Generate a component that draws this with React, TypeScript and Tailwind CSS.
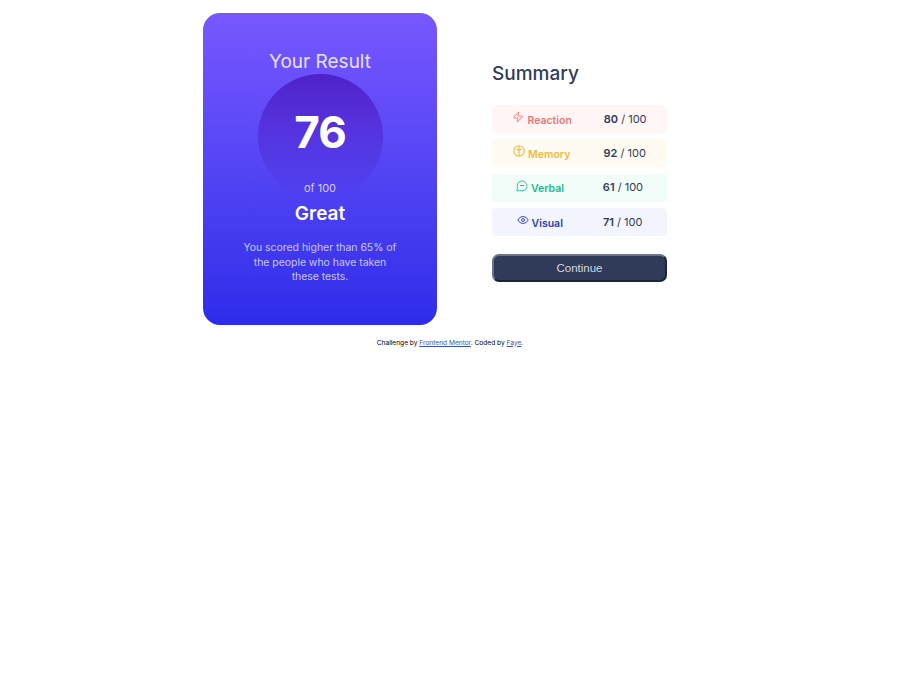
import { Eye, MessageCircle, Zap } from 'lucide-react';

function MemoryIcon() {
  return (
    <svg width="12" height="12" viewBox="0 0 12 12" fill="none" stroke="currentColor" strokeWidth="1.1">
      <circle cx="6" cy="6" r="5.2" />
      <path d="M6 1v10M3.4 4.2c.9 0 1.6.5 2.6 1.2M8.6 4.2c-.9 0-1.6.5-2.6 1.2" />
    </svg>
  );
}

function VerbalIcon() {
  return (
    <span className="relative block h-3 w-3">
      <MessageCircle size={12} strokeWidth={1.8} />
      <span className="absolute left-[4px] top-[5.5px] h-px w-1 bg-current" />
    </span>
  );
}

const rows = [
  { name: 'Reaction', score: 80, box: 'bg-[#fff6f5]', text: 'text-[#ee7676]', icon: <Zap size={12} strokeWidth={1.8} /> },
  { name: 'Memory', score: 92, box: 'bg-[#fffbf2]', text: 'text-[#f2b93f]', icon: <MemoryIcon /> },
  { name: 'Verbal', score: 61, box: 'bg-[#f2fcf9]', text: 'text-[#1fb88f]', icon: <VerbalIcon /> },
  { name: 'Visual', score: 71, box: 'bg-[#f3f5fe]', text: 'text-[#2f3fb0]', icon: <Eye size={12} strokeWidth={1.8} /> },
];

export default function App() {
  return (
    <div className="flex min-h-[675px] flex-col bg-white font-['Inter',sans-serif]">
      <main className="ml-[203px] mt-[13px] flex items-start">
        <section className="flex h-[312px] w-[234px] flex-col items-center rounded-[17px] bg-gradient-to-b from-[#7857ff] to-[#2e2be9] pt-[36px] text-center">
          <h1 className="text-[19px] leading-[26px] text-[#e6e0ff]">Your Result</h1>
          <div className="-mt-[1px] flex h-[125px] w-[125px] flex-col items-center rounded-full bg-gradient-to-b from-[#4e21ca] to-[#4e21ca00] pt-[30px]">
            <span className="text-[44px] font-bold leading-[56px] tracking-[-1px] text-white">76</span>
            <span className="mt-[21px] text-[11px] leading-[14px] text-[#d5cdfb]">of 100</span>
          </div>
          <h2 className="mt-[2px] text-[19px] font-semibold leading-[26px] text-white">Great</h2>
          <p className="mt-[14px] w-[156px] text-[10.5px] leading-[14.5px] tracking-[-0.05px] text-[#c8c7ff]">
            You scored higher than 65% of the people who have taken these tests.
          </p>
        </section>

        <section className="ml-[55px] flex w-[175px] flex-col pt-[48px]">
          <h2 className="text-[19px] font-medium leading-[26px] text-[#303b5a]">Summary</h2>
          <ul className="mt-[18px] flex flex-col gap-[6.3px]">
            {rows.map((row) => (
              <li key={row.name} className={`flex h-[28px] items-center justify-around rounded-[4px] px-[5px] text-[10.5px] ${row.box}`}>
                <div className={`flex items-center gap-[3px] font-semibold ${row.text}`}>
                  <span className="-mt-[4px]">{row.icon}</span>
                  <span className="mt-[3px]">{row.name}</span>
                </div>
                <div className="ml-[1px] whitespace-nowrap text-[11px] text-[#303b5a]">
                  <span className="font-semibold">{row.score}</span>
                  <span> / 100</span>
                </div>
              </li>
            ))}
          </ul>
          <button className="mt-[18px] h-[28px] rounded-[7px] border-2 border-t-[#6b7388] border-r-[#1d2437] border-b-[#1d2437] border-l-[#6b7388] bg-[#303b5a] pt-[1px] font-['Liberation_Sans',sans-serif] text-[11.5px] text-[#d3d7e3]">
            Continue
          </button>
        </section>
      </main>
      <footer className="mt-[12.5px] text-center text-[6.6px] leading-[10px] text-black">
        Challenge by <a href="#" className="text-[#3e52a3] underline">Frontend Mentor</a>. Coded by <a href="#" className="text-[#3e52a3] underline">Faye</a>.
      </footer>
    </div>
  );
}
